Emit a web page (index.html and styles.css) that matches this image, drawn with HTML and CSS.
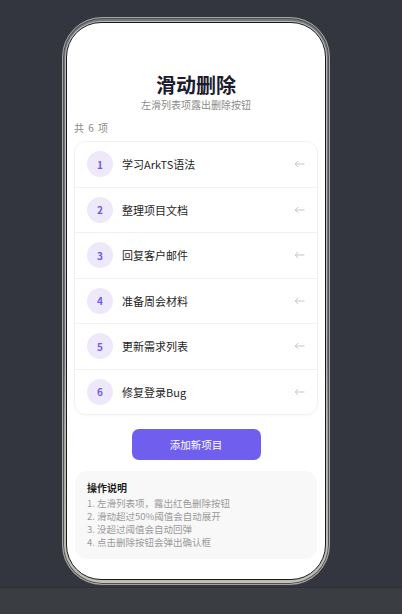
FILE: index.html
```html
<!DOCTYPE html>
<html lang="zh-CN">
<head>
    <meta charset="UTF-8">
    <meta name="viewport" content="width=device-width, initial-scale=1.0">
    <title>滑动删除</title>
    <link rel="stylesheet" href="styles.css">
</head>
<body>
    <div class="stage">
        <div class="phone">
            <div class="screen">
                <h1 class="title">滑动删除</h1>
                <p class="subtitle">左滑列表项露出删除按钮</p>
                <p class="count">共 6 项</p>

                <ul class="list">
                    <li class="row">
                        <span class="num">1</span>
                        <span class="label">学习ArkTS语法</span>
                        <svg class="arrow" width="11" height="8" viewBox="0 0 11 8"><path d="M10.5 4H1.2M4.2 1L1.2 4L4.2 7"/></svg>
                    </li>
                    <li class="row">
                        <span class="num">2</span>
                        <span class="label">整理项目文档</span>
                        <svg class="arrow" width="11" height="8" viewBox="0 0 11 8"><path d="M10.5 4H1.2M4.2 1L1.2 4L4.2 7"/></svg>
                    </li>
                    <li class="row">
                        <span class="num">3</span>
                        <span class="label">回复客户邮件</span>
                        <svg class="arrow" width="11" height="8" viewBox="0 0 11 8"><path d="M10.5 4H1.2M4.2 1L1.2 4L4.2 7"/></svg>
                    </li>
                    <li class="row">
                        <span class="num">4</span>
                        <span class="label">准备周会材料</span>
                        <svg class="arrow" width="11" height="8" viewBox="0 0 11 8"><path d="M10.5 4H1.2M4.2 1L1.2 4L4.2 7"/></svg>
                    </li>
                    <li class="row">
                        <span class="num">5</span>
                        <span class="label">更新需求列表</span>
                        <svg class="arrow" width="11" height="8" viewBox="0 0 11 8"><path d="M10.5 4H1.2M4.2 1L1.2 4L4.2 7"/></svg>
                    </li>
                    <li class="row">
                        <span class="num">6</span>
                        <span class="label">修复登录Bug</span>
                        <svg class="arrow" width="11" height="8" viewBox="0 0 11 8"><path d="M10.5 4H1.2M4.2 1L1.2 4L4.2 7"/></svg>
                    </li>
                </ul>

                <button class="add-btn">添加新项目</button>

                <div class="help">
                    <h2 class="help-title">操作说明</h2>
                    <p>1. 左滑列表项，露出红色删除按钮</p>
                    <p>2. 滑动超过50%阈值会自动展开</p>
                    <p>3. 没超过阈值会自动回弹</p>
                    <p>4. 点击删除按钮会弹出确认框</p>
                </div>
            </div>
        </div>
    </div>
    <div class="bottom-bar"></div>
</body>
</html>
```

FILE: styles.css
```css
body {
    margin: 0;
    background: #33363e;
    font-family: "Noto Sans CJK SC", "Noto Sans", sans-serif;
}
.stage {
    height: 587px;
    padding-top: 17px;
    box-sizing: border-box;
}
.bottom-bar {
    height: 27px;
    background: #3a3d41;
    border-top: 1px solid #2c2f33;
}
.phone {
    margin-left: 62px;
    width: 268px;
    height: 568px;
    box-sizing: border-box;
    padding: 4px 3px;
    border: 1px solid #a2a4a8;
    border-radius: 40px;
    background: linear-gradient(180deg, #76787c 0%, #6e7074 60%, #a69e8c 72%, #c9c0aa 100%);
    box-shadow: inset 0 0 0 1px #505256;
}
.screen {
    height: 100%;
    box-sizing: border-box;
    border: 1px solid #1a1b1d;
    border-radius: 35px;
    background: #ffffff;
    padding: 49px 7px 0;
    overflow: hidden;
    box-shadow: 0 0 0 1px #b9bbbf;
}
.title {
    margin: 0;
    font-size: 20px;
    line-height: 26px;
    font-weight: 700;
    text-align: center;
    color: #1c1c2e;
}
.subtitle {
    margin: 0;
    font-size: 10px;
    line-height: 14px;
    text-align: center;
    color: #8a8a8a;
}
.count {
    margin: 9px 0 0;
    font-size: 10px;
    line-height: 14px;
    word-spacing: 2px;
    color: #8a8a8a;
}
.list {
    list-style: none;
    margin: 6px 0 0;
    padding: 0;
    background: #ffffff;
    border: 1px solid #f1f1f3;
    border-radius: 12px;
    box-shadow: 0 1px 3px rgba(0, 0, 0, 0.03);
}
.row {
    display: flex;
    align-items: center;
    height: 44.5px;
    padding: 0 12px;
    border-bottom: 1px solid #f2f2f4;
}
.row:last-child {
    border-bottom: none;
}
.num {
    flex: none;
    width: 26px;
    height: 26px;
    border-radius: 50%;
    background: #eee9fa;
    color: #6c5ce7;
    font-size: 10px;
    font-weight: 700;
    display: flex;
    align-items: center;
    justify-content: center;
}
.label {
    flex: 1;
    margin-left: 9px;
    font-size: 11px;
    color: #1e1e1e;
}
.arrow {
    flex: none;
}
.arrow path {
    fill: none;
    stroke: #c6c6c9;
    stroke-width: 1;
}
.add-btn {
    display: block;
    margin: 14px auto 0;
    width: 129px;
    height: 31px;
    border: none;
    border-radius: 7px;
    background: #705fee;
    color: #ffffff;
    font-family: inherit;
    font-size: 10.5px;
    cursor: pointer;
}
.help {
    margin: 11px 1px 0;
    padding: 10px 12px 10px;
    background: #f8f8f8;
    border-radius: 12px;
}
.help-title {
    margin: 0 0 2px;
    font-size: 10px;
    line-height: 14px;
    font-weight: 700;
    color: #1e1e1e;
}
.help p {
    margin: 0;
    font-size: 9.5px;
    line-height: 13px;
    color: #9a9a9a;
}
```
